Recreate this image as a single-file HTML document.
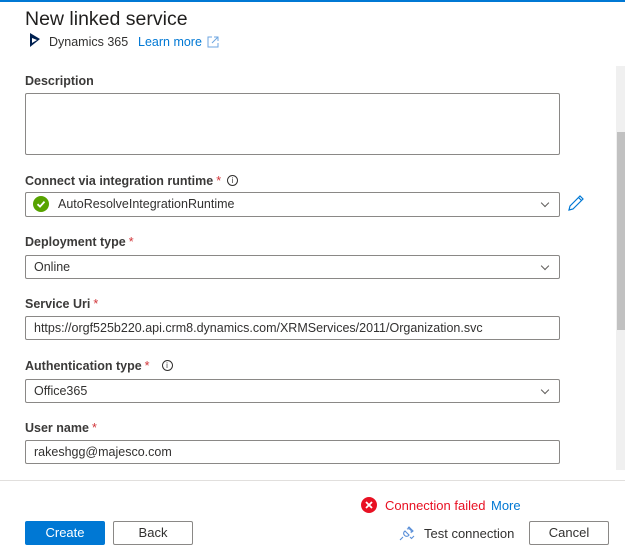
<!DOCTYPE html>
<html><head><style>
*{box-sizing:border-box;margin:0;padding:0}
body{width:625px;height:548px;overflow:hidden;background:#fff;font-family:"Liberation Sans",sans-serif;font-size:13px;color:#323130;position:relative}
.a{position:absolute}
.lbl{position:absolute;left:25px;font-weight:bold;font-size:12.5px;color:#3b3a39}
.lbl .s{color:#d13438;font-weight:normal;margin-left:3px}
.box{position:absolute;left:25px;width:535px;border:1px solid #8a8886;border-radius:2px;height:24px;font-size:12.5px;padding:4px 8px}
.chev{position:absolute;right:11px;top:7px;width:6px;height:6px;border-right:1px solid #605e5c;border-bottom:1px solid #605e5c;transform:rotate(45deg)}
.info{display:inline-block;width:11px;height:11px;border:1px solid #323130;border-radius:50%;font-size:8px;text-align:center;line-height:9px;font-weight:normal;vertical-align:2px;margin-left:6px}
.btn{position:absolute;top:521px;height:24px;border:1px solid #8a8886;border-radius:2px;text-align:center;line-height:22px;font-size:13px}
</style></head><body>
<div class="a" style="left:0;top:0;width:625px;height:2px;background:#0078d4"></div>
<div class="a" style="left:25px;top:8px;font-size:19.5px;color:#201f1e">New linked service</div>
<svg class="a" style="left:29px;top:33px" width="12" height="14" viewBox="0 0 12 14"><path d="M1 0L11 6L1 14Z" fill="#002050"/><path d="M3 5L8 7L3 10Z" fill="#fff"/></svg>
<div class="a" style="left:49px;top:35px;font-size:12.5px">Dynamics 365</div>
<div class="a" style="left:138px;top:35px;font-size:12.5px;color:#0078d4">Learn more</div>
<svg class="a" style="left:207px;top:36px" width="12" height="12" viewBox="0 0 12 12"><path d="M5 1H1v10h10V7M7 1h4v4M11 1L5 7" fill="none" stroke="#6ea6e0" stroke-width="1"/></svg>

<div class="lbl" style="top:74px">Description</div>
<div class="box" style="top:93px;height:62px"></div>

<div class="lbl" style="top:174px">Connect via integration runtime<span class="s">*</span><span class="info">i</span></div>
<div class="box" style="top:192px;height:25px;padding-left:32px">AutoResolveIntegrationRuntime<div class="chev"></div></div>
<svg class="a" style="left:33px;top:196px" width="16" height="16" viewBox="0 0 16 16"><circle cx="8" cy="8" r="8" fill="#57a300"/><path d="M4.5 8.2L7 10.6L11.5 5.6" fill="none" stroke="#fff" stroke-width="1.8"/></svg>
<svg class="a" style="left:567px;top:194px" width="18" height="18" viewBox="0 0 18 18"><path d="M2 16L3 12L13 2L16 5L6 15Z M11.5 3.5L14.5 6.5" fill="none" stroke="#0078d4" stroke-width="1.2"/></svg>

<div class="lbl" style="top:235px">Deployment type<span class="s">*</span></div>
<div class="box" style="top:255px">Online<div class="chev"></div></div>

<div class="lbl" style="top:297px">Service Uri<span class="s">*</span></div>
<div class="box" style="top:316px">https://orgf525b220.api.crm8.dynamics.com/XRMServices/2011/Organization.svc</div>

<div class="lbl" style="top:359px">Authentication type<span class="s">*</span><span class="info" style="margin-left:12px">i</span></div>
<div class="box" style="top:379px">Office365<div class="chev"></div></div>

<div class="lbl" style="top:421px">User name<span class="s">*</span></div>
<div class="box" style="top:440px">rakeshgg@majesco.com</div>

<div class="a" style="left:616px;top:66px;width:9px;height:404px;background:#f0f0f0"></div>
<div class="a" style="left:617px;top:132px;width:8px;height:198px;background:#c1c1c1"></div>

<div class="a" style="left:0;top:480px;width:625px;height:1px;background:#e1dfdd"></div>
<svg class="a" style="left:361px;top:497px" width="16" height="16" viewBox="0 0 16 16"><circle cx="8" cy="8" r="8" fill="#e81123"/><path d="M5 5L11 11M11 5L5 11" stroke="#fff" stroke-width="1.8"/></svg>
<div class="a" style="left:385px;top:498px;color:#e81123;font-size:13px">Connection failed</div>
<div class="a" style="left:491px;top:498px;color:#0078d4;font-size:13px">More</div>

<div class="btn" style="left:25px;width:80px;background:#0078d4;border-color:#0078d4;color:#fff">Create</div>
<div class="btn" style="left:113px;width:80px">Back</div>
<svg class="a" style="left:399px;top:525px" width="16" height="16" viewBox="0 0 16 16"><path d="M1 15L4 12M6 6L10 10M5 7a3 3 0 0 0 4 4l1-1-4-4zM9 3l1-1 4 4-1 1M8 4a3 3 0 0 1 4 4M11 12l1.5 1.5L15 11" fill="none" stroke="#5a8fd8" stroke-width="1.1"/></svg>
<div class="a" style="left:424px;top:526px;font-size:13px">Test connection</div>
<div class="btn" style="left:529px;width:80px">Cancel</div>
</body></html>
